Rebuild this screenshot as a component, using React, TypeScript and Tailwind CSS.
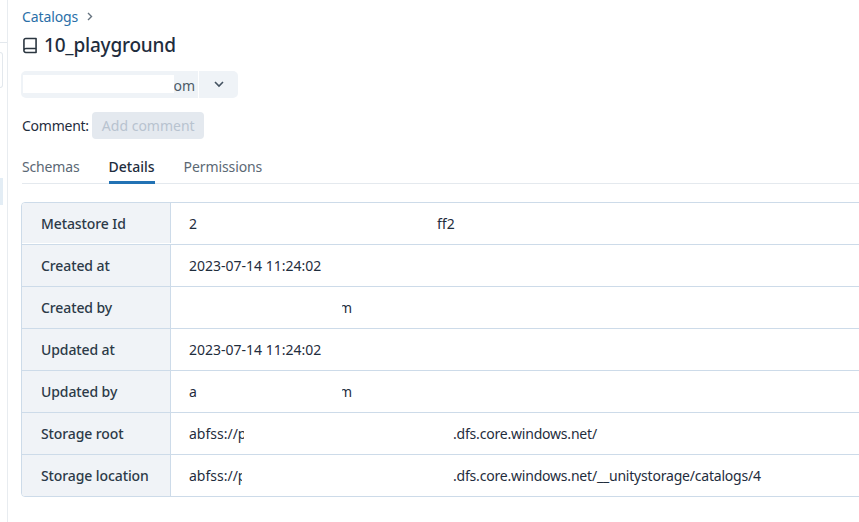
const rows: { label: string; parts: { x: number; text: string }[]; covers?: { x: number; w: number }[] }[] = [
  { label: "Metastore Id", parts: [{ x: 0, text: "2" }, { x: 248, text: "ff2" }] },
  { label: "Created at", parts: [{ x: 0, text: "2023-07-14 11:24:02" }] },
  { label: "Created by", parts: [{ x: 150, text: "m" }], covers: [{ x: 145, w: 8 }] },
  { label: "Updated at", parts: [{ x: 0, text: "2023-07-14 11:24:02" }] },
  { label: "Updated by", parts: [{ x: 0, text: "a" }, { x: 150, text: "m" }], covers: [{ x: 145, w: 8 }] },
  { label: "Storage root", parts: [{ x: 0, text: "abfss://p" }, { x: 264, text: ".dfs.core.windows.net/" }], covers: [{ x: 55, w: 20 }] },
  { label: "Storage location", parts: [{ x: 0, text: "abfss://p" }, { x: 264, text: ".dfs.core.windows.net/__unitystorage/catalogs/4" }], covers: [{ x: 53, w: 20 }] },
];

function BookIcon() {
  return (
    <svg width="14" height="17" viewBox="0 0 15 17" fill="none" stroke="#2b3640" strokeWidth="1.7" strokeLinejoin="round">
      <path d="M1 13.5V3a2 2 0 0 1 2-2h11v15H3a2.2 2.2 0 0 1-2-2.5a2.2 2.2 0 0 1 2-1.8h11" />
    </svg>
  );
}

export default function App() {
  return (
    <div className="w-[859px] h-[522px] overflow-hidden bg-white flex font-['Noto_Sans',sans-serif] text-[14px] text-[#1f2d3d]">
      <div className="w-[8px] shrink-0 border-r border-[#e8ecf0] flex flex-col">
        <div className="h-[43px] shrink-0 border-b border-[#e3e8ed]" />
        <div className="mt-[9px] h-[36px] w-[3px] border-y border-r border-[#e3e8ed] rounded-r-[3px]" />
        <div className="mt-[90px] h-[27px] w-[3px] bg-[#e3edf5]" />
      </div>
      <div className="flex-1 min-w-0 pl-[14px] pt-[7px]">
        <div className="flex items-center gap-[9px] h-[18px] text-[#2a6fa8] tracking-[-0.1px]">
          <span>Catalogs</span>
          <svg width="6" height="9" viewBox="0 0 6 9" fill="none" stroke="#66737f" strokeWidth="1.4">
            <path d="M1 1l3.5 3.5L1 8" />
          </svg>
        </div>
        <div className="mt-[8px] flex items-center gap-[7px] h-[24px]">
          <div className="ml-[1px] flex">
            <BookIcon />
          </div>
          <h1 className="text-[19px] font-medium leading-[24px] tracking-[-0.2px]">10_playground</h1>
        </div>
        <div className="-ml-px mt-[14px] flex h-[27px] w-[217px] rounded-[5px] bg-[#eff3f7] overflow-hidden">
          <div className="relative w-[177px] flex items-center justify-end pr-[3px] pt-[1px] text-[#4d5b68] text-[14px]">
            om
            <div className="absolute left-[2px] top-[4px] w-[151px] h-[18px] bg-white" />
          </div>
          <div className="w-px bg-white" />
          <div className="flex-1 flex items-center justify-center">
            <svg width="10" height="7" viewBox="0 0 10 7" fill="none" stroke="#445261" strokeWidth="1.6">
              <path d="M1 1l4 4 4-4" />
            </svg>
          </div>
        </div>
        <div className="mt-[14px] flex items-center gap-[3px] h-[27px]">
          <span className="tracking-[-0.25px]">Comment:</span>
          <div className="h-[27px] w-[112px] pl-[10px] rounded-[4px] bg-[#e4e9ef] text-[#b8c3cf] flex items-center whitespace-nowrap">Add comment</div>
        </div>
        <div className="mt-[14px] flex gap-[29px] border-b border-[#e4e9ee] h-[31px] text-[#5b6874]">
          <div className="h-[31px] pt-[3px] tracking-[-0.15px]">Schemas</div>
          <div className="h-[31px] pt-[3px] text-[#1f2d3d] font-medium border-b-[3px] border-[#2272b4]">Details</div>
          <div className="h-[31px] pt-[3px] tracking-[-0.1px]">Permissions</div>
        </div>
        <div className="-ml-px mt-[18px] w-[860px] border border-[#cddbe9] rounded-[4px] overflow-hidden">
          {rows.map((row, i) => (
            <div key={row.label} className={i > 0 ? "flex h-[42px] border-t border-[#cddbe9]" : "flex h-[41px] pb-[1px]"}>
              <div className="w-[149px] shrink-0 bg-[#f0f3f7] border-r border-[#cddbe9] pl-[19px] flex items-center font-medium text-[#2c3a48] tracking-[-0.1px]">
                {row.label}
              </div>
              <div className="relative flex-1 flex items-center">
                {row.parts.map((part) => (
                  <span
                    key={part.text}
                    className={`absolute whitespace-nowrap ${part.text.startsWith(".dfs") ? "tracking-[-0.2px]" : ""}`}
                    style={{ left: 18 + part.x }}
                  >
                    {part.text}
                  </span>
                ))}
                {row.covers?.map((cover) => (
                  <div key={cover.x} className="absolute top-[8px] h-[24px] bg-white" style={{ left: 18 + cover.x, width: cover.w }} />
                ))}
              </div>
            </div>
          ))}
        </div>
      </div>
    </div>
  );
}
